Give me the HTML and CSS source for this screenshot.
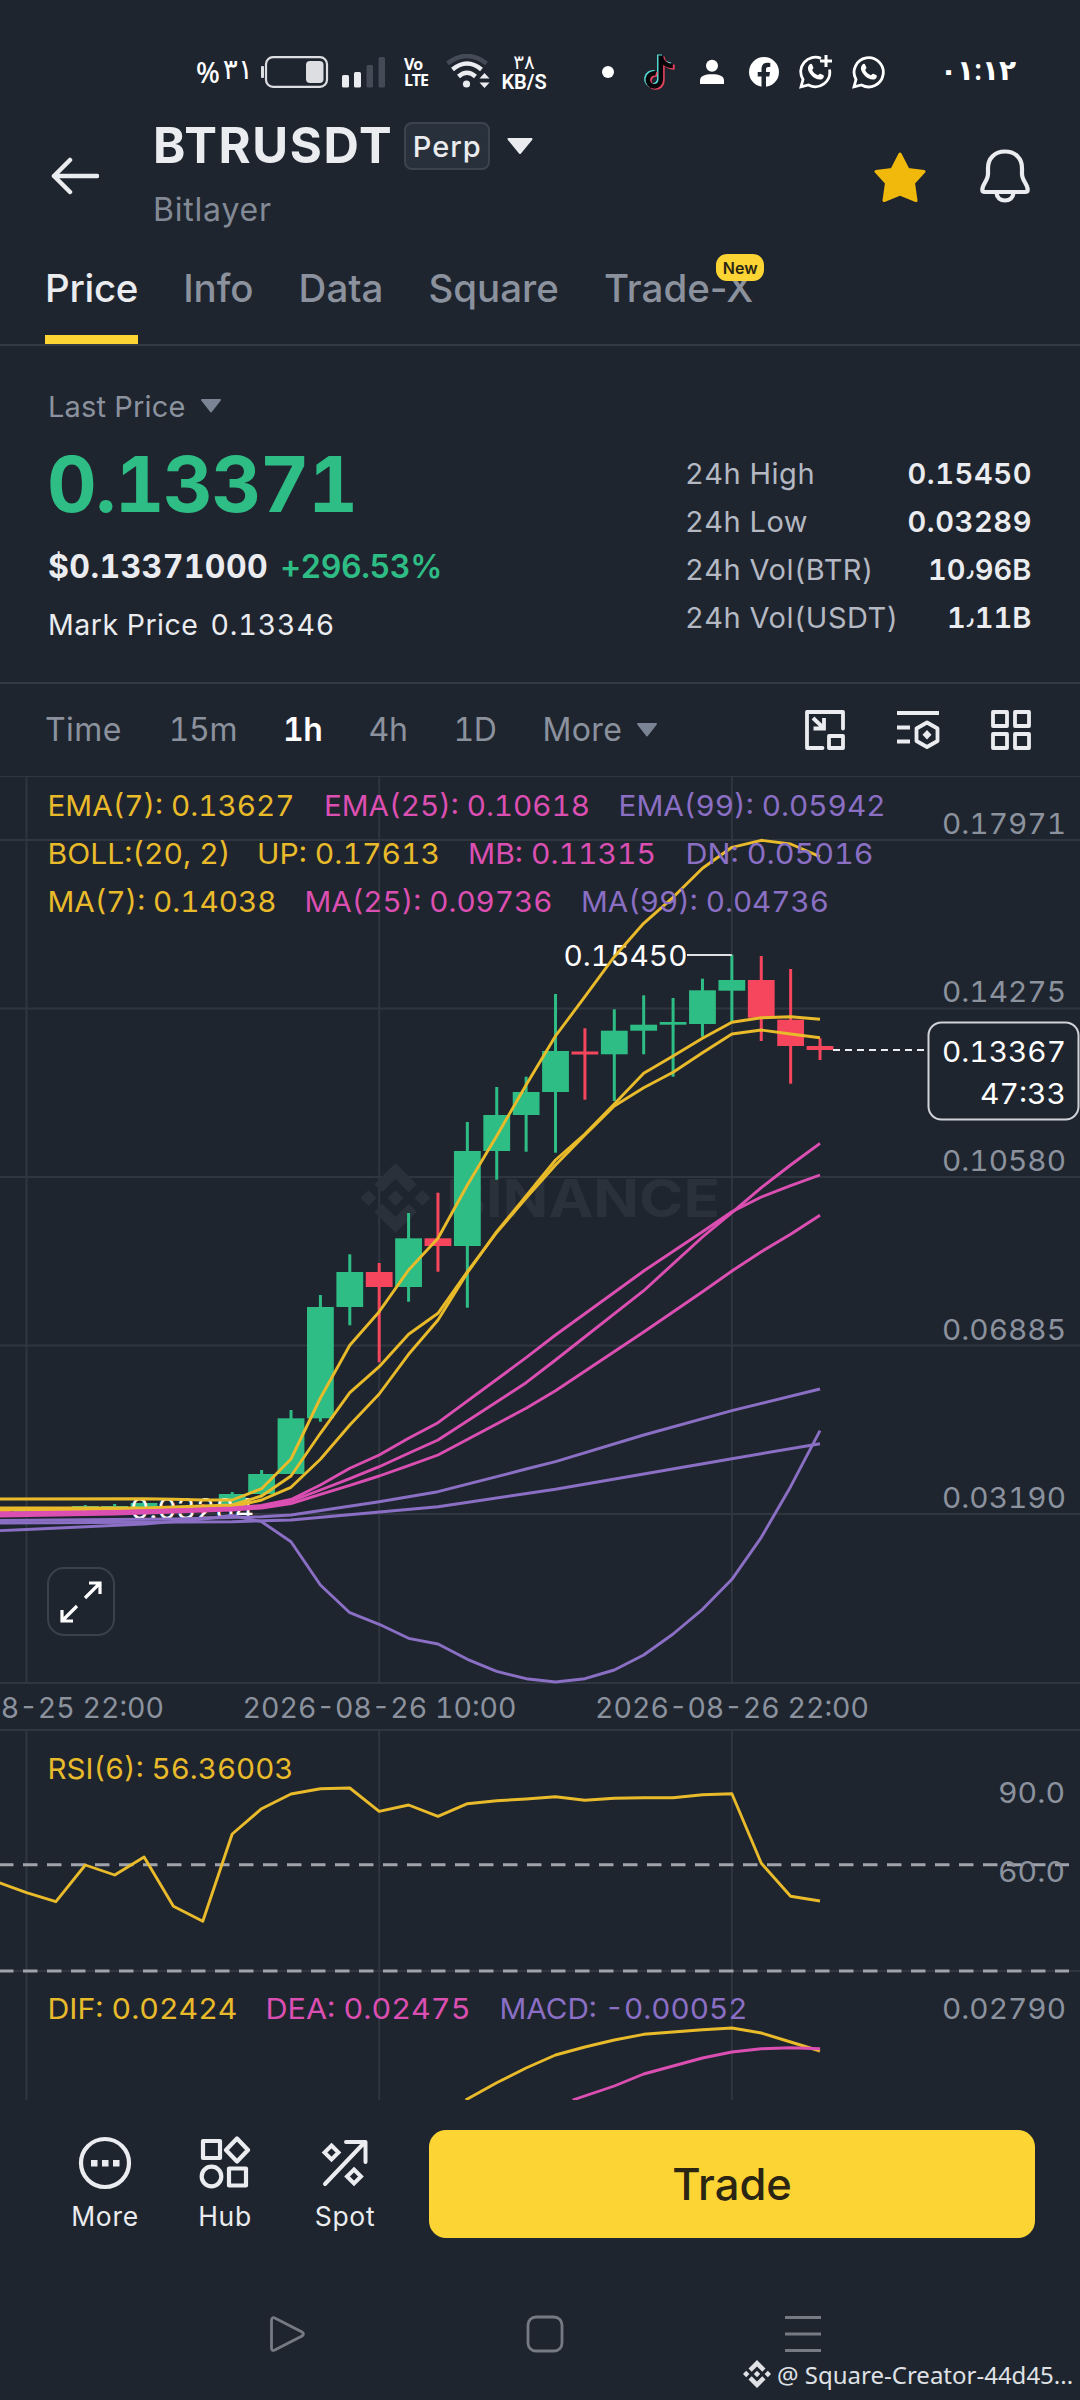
FILE: index.html
```
<!DOCTYPE html>
<html lang="en">
<head>
    <meta charset="utf-8">
    <title>BTRUSDT Perp</title>

    <link rel="stylesheet" href="styles.css">

</head>
<body>

    <div class="status-bar">
        <span class="battery-text">%<span class="battery-num">٣١</span></span>
        <svg class="battery" width="68" height="32" viewBox="0 0 68 32">
            <rect x="0" y="10" width="3" height="12" rx="1" fill="#dcdee2"/>
            <rect x="5" y="1.2" width="61" height="29.6" rx="7" fill="none" stroke="#dcdee2" stroke-width="2.2"/>
            <rect x="45" y="5" width="17.500" height="22" rx="4" fill="#dcdee2"/>
        </svg>
        <svg class="signal" width="44" height="32" viewBox="0 0 44 32">
            <rect x="0" y="19" width="7" height="12.500" rx="1.500" fill="#eaecef"/>
            <rect x="12" y="16" width="7" height="15.500" rx="1.500" fill="#eaecef"/>
            <rect x="24.500" y="9" width="6.500" height="22.500" rx="1.500" fill="#454b56"/>
            <rect x="36.500" y="1" width="6.500" height="30.500" rx="1.500" fill="#454b56"/>
        </svg>
        <div class="volte"><span>Vo</span><span>LTE</span></div>
        <svg class="wifi" width="46" height="36" viewBox="0 0 46 36">
            <path d="M1.500 9.500Q21 -5.500 40.500 9.500" fill="none" stroke="#454b56" stroke-width="4.500"/>
            <path d="M6.500 15.500Q21 3.500 35.500 15.500M12.500 22.500Q21 15 29.500 22.500" fill="none" stroke="#eaecef" stroke-width="4.500"/>
            <circle cx="20.500" cy="30" r="3.600" fill="#eaecef"/>
            <path d="M33.500 24.500L38.500 19L43.500 24.500ZM33.500 28.500L38.500 34L43.500 28.500Z" fill="#eaecef"/>
        </svg>
        <div class="net-speed"><span>٣٨</span><span class="net-unit">KB/S</span></div>
        <span class="dot"></span>
        <svg class="tiktok" width="34" height="38" viewBox="0 0 34 38">
            <path d="M17.500 1.500V26a6.500 6.500 0 1 1-5-6.300M17.500 2c.6 5 5 9.500 11.500 10" fill="none" stroke="#55d5d0" stroke-width="5"/>
            <path d="M20.200 3.500V27.800a6.500 6.500 0 1 1-5-6.300M20.200 4.500c.6 5 5 9.500 12.500 9.800" fill="none" stroke="#e8435f" stroke-width="5"/>
            <path d="M18.800 2.500V26.800a6.500 6.500 0 1 1-5-6.300M18.800 3.500c.6 5 5 9.500 12 9.500" fill="none" stroke="#05070a" stroke-width="4.600"/>
        </svg>
        <svg class="person" width="24" height="26" viewBox="0 0 24 26">
            <circle cx="12" cy="6.800" r="6" fill="#fff"/>
            <path d="M0 25v-3.500C0 17 5 15.300 12 15.300S24 17 24 21.500V25Z" fill="#fff"/>
        </svg>
        <svg class="facebook" width="30" height="30" viewBox="0 0 30 30">
            <circle cx="15" cy="15" r="15" fill="#fff"/>
            <path d="M12.500 30V19.500H8.700V15h3.800v-3.200c0-3.900 2.300-6 5.800-6 1.300 0 2.700.2 3 .3v3.800h-1.900c-1.900 0-2.400 1.200-2.400 2.300V15h4l-.7 4.500H17V30Z" fill="#1f252f"/>
        </svg>
        <svg class="whatsapp" width="33" height="34" viewBox="0 0 33 34">
            <path d="M22 3.400A14.500 14.500 0 0 0 4 24.500L2 31.800L9.500 30A14.500 14.500 0 0 0 30.500 14.500" fill="none" stroke="#fff" stroke-width="2.800"/>
            <path d="M10.500 9.500c1-1 2.300-.8 2.700.2l1.200 2.800c.3.800-1 1.900-1.200 2.500.9 2.300 3.200 4.300 5.600 5.300.8-.2 1.500-1.900 2.400-1.600l3 1.400c1.300.8.500 3-.8 3.800-2 1.200-4.500.8-7.200-.6-3-1.600-5.600-4.500-6.700-7.300-.9-2.500-.8-4.800 1-6.500Z" fill="#fff"/>
            <path d="M27 0V12M21 6H33" stroke="#fff" stroke-width="3"/>
        </svg>
        <svg class="whatsapp" width="33" height="34" viewBox="0 0 33 34">
            <path d="M4 24.500A14.600 14.600 0 1 1 9.500 30L2 31.800Z" fill="none" stroke="#fff" stroke-width="2.800"/>
            <path d="M10.500 9.500c1-1 2.300-.8 2.700.2l1.200 2.800c.3.800-1 1.900-1.200 2.500.9 2.300 3.200 4.300 5.600 5.300.8-.2 1.500-1.900 2.400-1.600l3 1.400c1.300.8.500 3-.8 3.800-2 1.200-4.500.8-7.200-.6-3-1.600-5.600-4.500-6.700-7.300-.9-2.500-.8-4.800 1-6.500Z" fill="#fff"/>
        </svg>
        <span class="clock">٠١:١٢</span>
    </div>

    <div class="header">
        <svg class="back" width="48" height="38" viewBox="0 0 48 38">
            <path d="M46 19H3M19 3L3 19L19 35" fill="none" stroke="#eaecef" stroke-width="4.500" stroke-linecap="round" stroke-linejoin="round"/>
        </svg>
        <div class="symbol">
            <div class="symbol-row">
                <h1 class="symbol-name">BTRUSDT</h1>
                <span class="perp">Perp</span>
                <svg class="caret" width="28" height="18" viewBox="0 0 28 18"><path d="M2.500 2H25.500L14 16Z" fill="#eaecef" stroke="#eaecef" stroke-width="2" stroke-linejoin="round"/></svg>
            </div>
            <div class="symbol-sub">Bitlayer</div>
        </div>
        <svg class="star" width="52" height="52" viewBox="0 0 52 52">
            <path d="M26 3L34 18.500L50 20.500L39.500 32L42 49.500L26 43L10 49.500L12.500 32L2 20.500L18 18.500Z" fill="#f0b90b" stroke="#f0b90b" stroke-width="3" stroke-linejoin="round"/>
        </svg>
        <svg class="bell" width="50" height="54" viewBox="0 0 50 54">
            <path d="M25 2.500C14.500 2.500 8 9.500 8 19V25C8 31.500 2.300 35.500 2.300 40.500Q2.300 43 5 43H45Q47.700 43 47.700 40.500C47.700 35.500 42 31.500 42 25V19C42 9.500 35.500 2.500 25 2.500Z" fill="none" stroke="#eaecef" stroke-width="4.200"/>
            <path d="M16.500 44C17 49 20.500 51.500 25 51.500S33 49 33.500 44" fill="none" stroke="#eaecef" stroke-width="4.200"/>
        </svg>
    </div>

    <div class="tabs">
        <span class="tab active">Price</span>
        <span class="tab">Info</span>
        <span class="tab">Data</span>
        <span class="tab">Square</span>
        <span class="tab tab-new">Trade-X<span class="badge-new">New</span></span>
    </div>

    <div class="price-section">
        <div class="price-main">
            <div class="last-label">Last Price
                <svg class="caret-small" width="22" height="16" viewBox="0 0 22 16"><path d="M2 2H20L11 13.500Z" fill="#7b8494" stroke="#7b8494" stroke-width="2" stroke-linejoin="round"/></svg>
            </div>
            <div class="last-price">0.13371</div>
            <div class="fiat-row"><span class="fiat">$0.13371000</span><span class="change">+296.53%</span></div>
            <div class="mark-row"><span class="mark-label">Mark Price</span><span class="mark-value">0.13346</span></div>
        </div>
        <div class="stats">
            <div class="stat"><span>24h High</span><b>0.15450</b></div>
            <div class="stat"><span>24h Low</span><b>0.03289</b></div>
            <div class="stat"><span>24h Vol(BTR)</span><b>10<i>٫</i>96B</b></div>
            <div class="stat"><span>24h Vol(USDT)</span><b>1<i>٫</i>11B</b></div>
        </div>
    </div>

    <div class="intervals">
        <span class="time">Time</span>
        <span>15m</span>
        <span class="selected">1h</span>
        <span>4h</span>
        <span>1D</span>
        <span class="more">More
            <svg class="caret-small" width="22" height="16" viewBox="0 0 22 16"><path d="M2 2H20L11 13.500Z" fill="#7b8494" stroke="#7b8494" stroke-width="2" stroke-linejoin="round"/></svg>
        </span>
        <div class="tools">
            <svg width="42" height="42" viewBox="0 0 42 42" fill="none" stroke="#eaecef" stroke-width="3.800">
                <path d="M39 19.500V3H3V39H18.500" stroke-linejoin="round" stroke-linecap="round"/>
                <rect x="25" y="27" width="14" height="12" stroke-linejoin="round"/>
                <path d="M9 9L19 18.500M20 9V19.500H9.500"/>
            </svg>
            <svg width="44" height="42" viewBox="0 0 44 42" fill="none" stroke="#eaecef" stroke-width="3.800">
                <path d="M1 4H43M1 18.500H14M1 32.500H14"/>
                <path d="M31 13.500L41.500 19.500V32L31 38L20.500 32V19.500Z" stroke-linejoin="round"/>
                <path d="M31 21L35.500 25.700L31 30.500L26.500 25.700Z" fill="#eaecef" stroke="none"/>
            </svg>
            <svg width="42" height="42" viewBox="0 0 42 42" fill="none" stroke="#eaecef" stroke-width="3.800" stroke-linejoin="round">
                <rect x="3" y="3" width="14" height="14"/>
                <rect x="25" y="3" width="14" height="14"/>
                <rect x="3" y="25" width="14" height="14"/>
                <rect x="25" y="25" width="14" height="14"/>
            </svg>
        </div>
    </div>

    <div class="chart">
        <svg id="chartSvg" width="1080" height="1324" viewBox="0 776 1080 1324"></svg>
        <div class="expand">
            <svg width="42" height="42" viewBox="0 0 42 42" fill="none" stroke="#fff" stroke-width="3.200">
                <path d="M25 17L40 2M29 2H40V13M17 25L2 40M2 29V40H13"/>
            </svg>
        </div>
    </div>

    <div class="bottom-bar">
        <div class="action">
            <svg width="54" height="54" viewBox="0 0 54 54">
                <circle cx="27" cy="27" r="24" fill="none" stroke="#eaecef" stroke-width="4.200"/>
                <path d="M13 24h6.500v6.500H13ZM24 24h6.500v6.500H24ZM35 24h6.500v6.500H35Z" fill="#eaecef"/>
            </svg>
            <span>More</span>
        </div>
        <div class="action">
            <svg width="54" height="54" viewBox="0 0 54 54" fill="none" stroke="#eaecef" stroke-width="4.200" stroke-linejoin="round">
                <rect x="5" y="5" width="17" height="17"/>
                <path d="M39 2.500L50 14L39 25.500L28 14Z"/>
                <circle cx="13.500" cy="40.500" r="9.800"/>
                <rect x="31" y="32.500" width="17" height="17"/>
            </svg>
            <span>Hub</span>
        </div>
        <div class="action">
            <svg width="54" height="54" viewBox="0 0 54 54" fill="none" stroke="#eaecef" stroke-width="4">
                <path d="M7 48L46 7M28 6H47.500V26" stroke-linejoin="round" stroke-linecap="round"/>
                <path d="M13.500 9.500L20.500 16.500L13.500 23.500L6.500 16.500ZM36 33.500L43 40.500L36 47.500L29 40.500Z"/>
            </svg>
            <span>Spot</span>
        </div>
        <button class="trade-btn">Trade</button>
    </div>

    <div class="nav-bar">
        <svg width="38" height="38" viewBox="0 0 38 38"><path d="M3.500 5.500V33Q3.500 36.500 6.800 35L34 21Q36.800 19 34 17L6.800 3Q3.500 1.800 3.500 5.500Z" fill="none" stroke="#767a82" stroke-width="2.800"/></svg>
        <svg width="38" height="38" viewBox="0 0 38 38"><rect x="2" y="2" width="34" height="34" rx="8" fill="none" stroke="#767a82" stroke-width="2.800"/></svg>
        <svg width="38" height="38" viewBox="0 0 38 38"><path d="M1 2.500H37M1 19H37M1 35.500H37" stroke="#767a82" stroke-width="3.200"/></svg>
    </div>

    <div class="creator">
        <svg width="28" height="28" viewBox="0 0 28 28" fill="#dfe1e5">
            <path d="M14 0L22.500 8.500L19.300 11.700L14 6.400L8.700 11.700L5.500 8.500ZM14 28L22.500 19.500L19.300 16.300L14 21.600L8.700 16.300L5.500 19.500ZM14 10.800L17.200 14L14 17.200L10.800 14ZM3.200 10.800L6.400 14L3.200 17.200L0 14ZM24.800 10.800L28 14L24.800 17.200L21.600 14Z"/>
        </svg>
        <span>@ Square-Creator-44d45...</span>
    </div>

    <script>

        const YELLOW = '#e9bb2b';
        const PINK = '#dc4fb2';
        const PURPLE = '#8a6fc4';
        const GREEN = '#2ebd85';
        const RED = '#f6465d';
        const GREY = '#8b929e';

        const step = 29.39;
        const xAt = i => 26.5 + i * step;

        // [index, up, body top, body bottom, wick top, wick bottom]
        const candles = [
            [-1, 0, 1511, 1513, 1509, 1515],
            [0, 1, 1510, 1512, 1508, 1514],
            [1, 0, 1510, 1512, 1508, 1514],
            [2, 1, 1506, 1511, 1505, 1513],
            [3, 1, 1506, 1509, 1504, 1511],
            [4, 1, 1503, 1507, 1501, 1509],
            [5, 0, 1507, 1511, 1503, 1513],
            [6, 0, 1508, 1511, 1504, 1514],
            [7, 1, 1494, 1506, 1492, 1508],
            [8, 1, 1474, 1494, 1470, 1496],
            [9, 1, 1418.3, 1474, 1410, 1474],
            [10, 1, 1307, 1418.3, 1295, 1421.7],
            [11, 1, 1272, 1307, 1254.3, 1325.3],
            [12, 0, 1272, 1287, 1263, 1362.3],
            [13, 1, 1238.3, 1287, 1213, 1301.7],
            [14, 0, 1238.3, 1246, 1192.7, 1271.7],
            [15, 1, 1151, 1246, 1122, 1307.7],
            [16, 1, 1115, 1151, 1087, 1179.7],
            [17, 1, 1092, 1115, 1076.7, 1151.7],
            [18, 1, 1051, 1092, 994, 1152.7],
            [19, 0, 1051.5, 1054.5, 1028.3, 1099.7],
            [20, 1, 1030.7, 1054.3, 1009.3, 1101],
            [21, 1, 1024.7, 1030.7, 995.3, 1054.3],
            [22, 1, 1022, 1024.7, 998, 1076.7],
            [23, 1, 990.3, 1024, 978.7, 1036.7],
            [24, 1, 980, 990.7, 954.7, 1021.7],
            [25, 0, 980, 1017.7, 956, 1041],
            [26, 0, 1019.7, 1046, 969, 1083.7],
            [27, 0, 1046, 1050, 1038.3, 1060]
        ];

        // every line is a list of [index, y]
        const lines = [
            // BOLL UP
            { color: YELLOW, pts: [[-1, 1499], [4, 1498.7], [5, 1499.3], [6, 1500], [7, 1500], [8, 1488.7], [9, 1459], [10, 1398], [11, 1345.3], [12, 1311.7], [13, 1270], [14, 1238.3], [15, 1185], [16, 1136], [17, 1085], [18, 1036], [19, 996.7], [20, 956.7], [21, 923.3], [22, 897.3], [23, 868.3], [24, 847.3], [25, 840.3], [26, 844], [27, 856.7]] },
            // MA(7)
            { color: YELLOW, pts: [[-1, 1510], [4, 1509], [7, 1507], [8, 1500], [9, 1487.3], [10, 1459.3], [11, 1425], [12, 1394], [13, 1354.3], [14, 1320], [15, 1272.7], [16, 1231.7], [17, 1196], [18, 1160], [19, 1134], [20, 1104], [21, 1073.3], [22, 1056], [23, 1038.3], [24, 1022.3], [25, 1017.7], [26, 1016.7], [27, 1019.3]] },
            // EMA(7)
            { color: YELLOW, pts: [[-1, 1508], [4, 1508], [7, 1505], [8, 1496], [9, 1476], [10, 1433.3], [11, 1392.7], [12, 1366.7], [13, 1334.3], [14, 1313.3], [15, 1271.7], [16, 1232.5], [17, 1198], [18, 1165], [19, 1135], [20, 1106], [21, 1087.7], [22, 1072.3], [23, 1052.7], [24, 1034], [25, 1030], [26, 1034], [27, 1037.7]] },
            // BOLL MB
            { color: PINK, pts: [[-1, 1513], [3, 1511.5], [7, 1508.5], [8, 1506.5], [9, 1501], [10, 1490], [11, 1478.7], [12, 1466.7], [13, 1453.3], [14, 1440], [17, 1382.7], [18, 1360], [21, 1290.7], [23, 1237], [24, 1212.7], [25, 1187.7], [26, 1165], [27, 1143.3]] },
            // EMA(25)
            { color: PINK, pts: [[-1, 1514], [3, 1512], [7, 1508], [8, 1505.5], [9, 1499.5], [10, 1485], [11, 1468.3], [12, 1455], [13, 1438.3], [14, 1422.7], [17, 1357.7], [18, 1335], [21, 1271], [23, 1231.7], [24, 1211.7], [25, 1197], [26, 1185.7], [27, 1175]] },
            // MA(25)
            { color: PINK, pts: [[-1, 1516], [3, 1514], [7, 1510], [8, 1508], [9, 1503.5], [10, 1494.3], [11, 1485.3], [12, 1476], [13, 1465.7], [14, 1455], [17, 1408.3], [18, 1390.7], [21, 1332], [23, 1291.7], [24, 1271], [25, 1251.7], [26, 1234.3], [27, 1215.3]] },
            // EMA(99)
            { color: PURPLE, pts: [[-1, 1520.5], [5, 1519], [8, 1516.7], [9, 1515], [12, 1501.7], [14, 1491.7], [17, 1469], [18, 1461.7], [21, 1435], [24, 1410.7], [27, 1389]] },
            // MA(99)
            { color: PURPLE, pts: [[-1, 1523], [7, 1521.7], [9, 1520], [14, 1506.7], [18, 1489.3], [24, 1458.7], [27, 1443.7]] },
            // BOLL DN
            { color: PURPLE, pts: [[-1, 1530.7], [0, 1529.5], [4, 1524], [6, 1519], [7, 1515.5], [8, 1521.7], [9, 1541.7], [10, 1585], [11, 1612.7], [12, 1624.3], [13, 1638.3], [14, 1644], [15, 1659.3], [16, 1671.3], [17, 1678.7], [18, 1682], [19, 1678.7], [20, 1670], [21, 1655], [22, 1634], [23, 1609.3], [24, 1579.3], [25, 1537.3], [26, 1486.7], [27, 1430.7]] }
        ];

        const rsi = [[-1, 1882], [0, 1892.7], [1, 1901.7], [2, 1865], [3, 1875], [4, 1857], [5, 1906.3], [6, 1921.3], [7, 1834], [8, 1808.7], [9, 1794], [10, 1788.7], [11, 1788], [12, 1811.3], [13, 1805], [14, 1816.3], [15, 1803.7], [16, 1800.7], [17, 1799], [18, 1796.7], [19, 1800.3], [20, 1798.3], [21, 1797.7], [22, 1797.7], [23, 1794.7], [24, 1793.7], [25, 1863.3], [26, 1896.3], [27, 1901]];
        const dif = [[14.94, 2100], [16, 2082.7], [17, 2068], [18, 2055], [19, 2047], [20, 2040], [21, 2034.3], [22, 2032], [23, 2029.7], [24, 2028], [25, 2033], [26, 2042], [27, 2051]];
        const dea = [[18.58, 2100], [20, 2086], [21, 2074], [22, 2066], [23, 2058], [24, 2052], [25, 2048.7], [26, 2047.7], [27, 2048.7]];

        // [text, x, baseline, width, color]
        const labels = [
            ['EMA(7): 0.13627', 47.5, 815.7, 247, YELLOW],
            ['EMA(25): 0.10618', 324, 815.7, 266, PINK],
            ['EMA(99): 0.05942', 618.5, 815.7, 267, PURPLE],
            ['BOLL:(20, 2)', 47.5, 863.7, 183, YELLOW],
            ['UP: 0.17613', 257, 863.7, 183, YELLOW],
            ['MB: 0.11315', 468, 863.7, 188, PINK],
            ['DN: 0.05016', 685.5, 863.7, 188, PURPLE],
            ['MA(7): 0.14038', 47.5, 911.7, 229, YELLOW],
            ['MA(25): 0.09736', 304.5, 911.7, 248, PINK],
            ['MA(99): 0.04736', 581, 911.7, 248, PURPLE],
            ['0.17971', 942, 834, 124, GREY],
            ['0.14275', 942, 1002, 124, GREY],
            ['0.10580', 942, 1171, 124, GREY],
            ['0.06885', 942, 1339.5, 124, GREY],
            ['0.03190', 942, 1507.7, 124, GREY],
            ['2026-08-25 22:00', -110, 1718, 274, GREY],
            ['2026-08-26 10:00', 242.5, 1718, 274, GREY],
            ['2026-08-26 22:00', 595, 1718, 274, GREY],
            ['RSI(6): 56.36003', 47.5, 1779, 246, YELLOW],
            ['90.0', 998, 1802.7, 67, GREY],
            ['60.0', 998, 1881.7, 67, GREY],
            ['DIF: 0.02424', 47.5, 2019, 190, YELLOW],
            ['DEA: 0.02475', 265.5, 2019, 205, PINK],
            ['MACD: -0.00052', 499.5, 2019, 248, PURPLE],
            ['0.02790', 942, 2019, 124, GREY]
        ];

        function line(x1, y1, x2, y2, cls) {
            return `<line x1="${x1}" y1="${y1}" x2="${x2}" y2="${y2}" class="${cls}"/>`;
        }

        function text(t, x, y, w, color) {
            return `<text x="${x}" y="${y}" textLength="${w}" lengthAdjust="spacingAndGlyphs" fill="${color}">${t}</text>`;
        }

        function poly(pts, color) {
            const p = pts.map(([i, y]) => `${xAt(i).toFixed(1)},${y}`).join(' ');
            return `<polyline points="${p}" stroke="${color}" class="indicator"/>`;
        }

        function renderChart() {
            let out = '';

            // grid
            [776, 840, 1008.5, 1177, 1345.5, 1514, 1683, 1730, 1971].forEach(y => out += line(0, y, 1080, y, 'grid'));
            [0, 12, 24].forEach(i => {
                out += line(xAt(i), 776, xAt(i), 1683, 'grid');
                out += line(xAt(i), 1730, xAt(i), 2100, 'grid');
            });

            // watermark
            out += `<g class="mark"><path transform="translate(360.500 1163) scale(2.5)" d="M14 0L22.500 8.500L19.300 11.700L14 6.400L8.700 11.700L5.500 8.500ZM14 28L22.500 19.500L19.300 16.300L14 21.600L8.700 16.300L5.500 19.500ZM14 10.800L17.200 14L14 17.200L10.800 14ZM3.200 10.800L6.400 14L3.200 17.200L0 14ZM24.800 10.800L28 14L24.800 17.200L21.600 14Z"/>
                <text x="446" y="1217" textLength="274" lengthAdjust="spacingAndGlyphs" class="mark-text">BINANCE</text></g>`;

            candles.forEach(([i, up, top, bottom, high, low]) => {
                const x = xAt(i);
                const color = up ? GREEN : RED;
                out += `<rect x="${x - 1.5}" y="${high}" width="3" height="${low - high}" fill="${color}"/>`;
                out += `<rect x="${x - 13.4}" y="${top}" width="26.8" height="${bottom - top}" fill="${color}"/>`;
            });

            // high and low price
            out += text('0.15450', 563.5, 966, 124, '#fff');
            out += line(687, 955, 731.8, 955, 'pointer');
            out += text('0.03284', 130, 1519, 124, '#fff');

            lines.forEach(l => out += poly(l.pts, l.color));

            // rsi levels
            out += line(-1, 1864.7, 1069, 1864.7, 'level');
            out += poly(rsi, YELLOW);
            out += line(-1, 1971, 1069, 1971, 'level');
            out += poly(dif, YELLOW) + poly(dea, PINK);

            labels.forEach(l => out += text(...l));

            // current price
            out += line(833, 1050, 926, 1050, 'current');
            out += '<rect x="928.500" y="1022.500" width="150" height="97" rx="13" class="price-tag"/>';
            out += text('0.13367', 942, 1062, 124, '#fff');
            out += text('47:33', 980, 1104, 86, '#fff');

            document.getElementById('chartSvg').innerHTML = out;
        }

        renderChart();
    </script>

</body>
</html>
```
FILE: styles.css
```
* {
    box-sizing: border-box;
}

body {
    margin: 0;
    width: 1080px;
    height: 2400px;
    overflow: hidden;
    position: relative;
    background-color: #1f252f;
    color: #eaecef;
    font-family: Inter, "Noto Sans", sans-serif;
    font-variant-numeric: tabular-nums;
    white-space: nowrap;
}

svg {
    display: block;
    flex: none;
}

/* phone status bar */
.status-bar {
    display: flex;
    align-items: center;
    height: 110px;
    padding: 34px 0 0 196px;
    color: #fff;
    font-family: "Noto Sans", "DejaVu Sans", sans-serif;
}

.battery-text {
    display: flex;
    width: 65px;
    font-size: 28px;
    font-weight: 500;
    line-height: 40px;
}

.battery-num {
    margin-top: -4px;
    margin-left: 3px;
    letter-spacing: -1px;
}

.signal {
    margin-left: 13px;
}

.volte {
    display: flex;
    flex-direction: column;
    width: 25px;
    margin-left: 18px;
    font-family: "Open Sans", sans-serif;
    font-size: 16px;
    font-weight: 700;
    line-height: 16px;
    letter-spacing: -1.2px;
}

.wifi {
    margin-left: 17px;
}

.net-speed {
    display: flex;
    flex-direction: column;
    align-items: center;
    width: 46px;
    margin-left: 9px;
    font-size: 20px;
    line-height: 20px;
}

.net-unit {
    font-family: Roboto, sans-serif;
    font-size: 20px;
    font-weight: 600;
}

.dot {
    width: 12px;
    height: 12px;
    margin-left: 55px;
    border-radius: 50%;
    background-color: #fff;
}

.tiktok {
    margin-left: 28px;
}

.person {
    margin-left: 24px;
}

.facebook {
    margin-left: 25px;
}

.whatsapp {
    margin-left: 20px;
}

.clock {
    margin-left: 55px;
    font-size: 28px;
    font-weight: 600;
    line-height: 40px;
    margin-top: -6px;
    letter-spacing: -2.5px;
}

/* symbol header */
.header {
    display: flex;
    height: 137px;
    padding: 10px 50px 0 51px;
}

.back {
    margin-top: 37px;
}

.symbol {
    flex: 1;
    margin-left: 54px;
}

.symbol-row {
    display: flex;
    align-items: center;
    height: 51px;
}

.symbol-name {
    margin: 0;
    font-size: 49px;
    font-weight: 700;
    line-height: 51px;
    letter-spacing: 1.6px;
}

.perp {
    width: 86px;
    height: 48px;
    margin-left: 11px;
    border: 2px solid #3b434f;
    border-radius: 8px;
    background-color: #28303b;
    font-size: 29px;
    font-weight: 500;
    line-height: 45px;
    letter-spacing: 1px;
    text-align: center;
}

.caret {
    margin-left: 16px;
}

.symbol-sub {
    margin-top: 19px;
    color: #838a96;
    font-size: 32px;
    line-height: 40px;
    letter-spacing: 0.8px;
}

.star {
    margin-top: 31px;
}

.bell {
    margin: 29px 0 0 54px;
}

/* tabs */
.tabs {
    display: flex;
    gap: 45px;
    height: 99px;
    padding: 0 46px 0 45px;
    border-bottom: 2px solid #333a45;
    font-variant-numeric: normal;
}

.tab {
    position: relative;
    height: 97px;
    color: #8b929e;
    font-size: 38.5px;
    font-weight: 500;
    line-height: 82px;
}

.tab.active {
    border-bottom: 9px solid #fcd535;
    color: #eaecef;
    letter-spacing: -0.3px;
}

.badge-new {
    position: absolute;
    top: 7px;
    right: -11px;
    width: 48px;
    height: 27px;
    border-radius: 11px;
    background-color: #fcd535;
    color: #2b2613;
    font-size: 16px;
    font-weight: 600;
    line-height: 28px;
    text-align: center;
}

/* price section */
.price-section {
    display: flex;
    justify-content: space-between;
    height: 338px;
    padding: 38px 48px 0 48px;
    border-bottom: 2px solid #333a45;
}

.last-label {
    display: flex;
    align-items: center;
    height: 44px;
    color: #8b929e;
    font-size: 29px;
    letter-spacing: 0.2px;
}

.caret-small {
    margin-left: 14px;
}

.last-price {
    height: 100px;
    margin-top: 6px;
    margin-left: -1px;
    color: #2ebd85;
    font-size: 77px;
    font-weight: 700;
    line-height: 100px;
    letter-spacing: -1.4px;
}

.fiat-row {
    display: flex;
    height: 50px;
    margin-top: 8px;
    font-size: 32px;
    line-height: 50px;
}

.fiat {
    font-weight: 700;
    letter-spacing: 0.4px;
}

.change {
    margin-left: 12px;
    color: #2ebd85;
    font-weight: 600;
    letter-spacing: -0.4px;
}

.mark-row {
    display: flex;
    height: 50px;
    margin-top: 8px;
    font-size: 28.5px;
    line-height: 50px;
}

.mark-label {
    letter-spacing: 0.5px;
}

.mark-value {
    margin-left: 12px;
    letter-spacing: 0.9px;
}

.stats {
    width: 347px;
    padding-top: 66px;
}

.stat {
    display: flex;
    justify-content: space-between;
    height: 48px;
    font-size: 29px;
    line-height: 48px;
}

.stat span {
    color: #b3b8c2;
    letter-spacing: 0.5px;
}

.stat b {
    font-weight: 600;
    letter-spacing: 0.6px;
}

.stat i {
    margin: 0 1px;
    font-family: "DejaVu Sans", sans-serif;
    font-size: 19px;
    font-style: normal;
    line-height: 20px;
    vertical-align: 3px;
    direction: ltr;
    unicode-bidi: isolate;
}

/* interval row */
.intervals {
    display: flex;
    align-items: center;
    gap: 46px;
    height: 92px;
    padding: 0 48px 1px 45px;
    color: #8b929e;
    font-size: 32px;
    letter-spacing: -0.4px;
}

.time {
    margin-right: 1px;
    letter-spacing: 0.4px;
}

.selected {
    color: #fff;
    font-weight: 600;
}

.more {
    display: flex;
    align-items: center;
    letter-spacing: 0.4px;
}

.tools {
    display: flex;
    gap: 50px;
    margin-left: auto;
}

/* chart */
.chart {
    position: relative;
    height: 1324px;
    font-size: 29px;
}

.grid {
    stroke: #2f3640;
    stroke-width: 2;
}

.mark {
    fill: #2a313b;
}

.mark-text {
    font-size: 52px;
    font-weight: 700;
}

.indicator {
    fill: none;
    stroke-width: 2.9;
    stroke-linejoin: round;
}

.pointer {
    stroke: #dfe1e5;
    stroke-width: 2;
}

.level {
    stroke: #a0a3aa;
    stroke-width: 3;
    stroke-dasharray: 14.500 9.500;
}

.current {
    stroke: #eaecef;
    stroke-width: 2;
    stroke-dasharray: 7 5;
}

.price-tag {
    fill: #1f252f;
    stroke: #cfd2d8;
    stroke-width: 2;
}

.expand {
    position: absolute;
    left: 47px;
    top: 791px;
    display: flex;
    align-items: center;
    justify-content: center;
    width: 68px;
    height: 69px;
    border: 2px solid #3a414c;
    border-radius: 17px;
    background-color: #1f252f;
}

/* bottom bar */
.bottom-bar {
    display: flex;
    height: 180px;
    padding: 30px 45px 0 45px;
}

.action {
    display: flex;
    flex-direction: column;
    align-items: center;
    width: 120px;
    padding-top: 6px;
    font-size: 26.5px;
    line-height: 40px;
    letter-spacing: 0.7px;
}

.action span {
    margin-top: 6px;
}

.trade-btn {
    flex: 1;
    height: 108px;
    margin-left: 24px;
    padding: 0;
    border: none;
    border-radius: 17px;
    background-color: #fcd535;
    color: #2b2613;
    font-family: inherit;
    font-size: 43.5px;
    font-weight: 500;
}

/* system navigation */
.nav-bar {
    display: flex;
    gap: 220px;
    height: 120px;
    padding: 35px 0 0 268px;
}

.creator {
    position: absolute;
    left: 743px;
    top: 2356px;
    display: flex;
    align-items: center;
    gap: 6px;
    height: 36px;
    color: #dfe1e5;
    font-family: "Noto Sans", sans-serif;
    font-size: 24px;
}
```
